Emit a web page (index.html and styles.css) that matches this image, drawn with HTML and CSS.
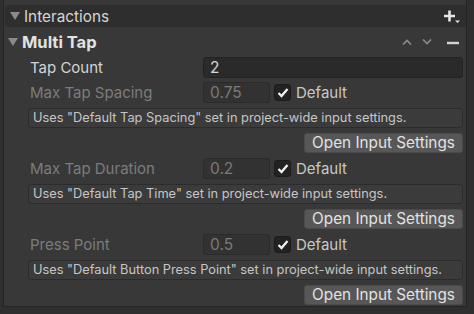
FILE: index.html
```html
<!DOCTYPE html>
<html lang="en">
  <head>
    <meta charset="UTF-8" />
    <title>Interactions</title>
    <link rel="stylesheet" href="styles.css">
  </head>
  <body>
    <div class="panel">
      <div class="list-header">
        <span class="foldout"></span>
        <span class="list-title">Interactions</span>
        <svg class="add-icon" width="16" height="14" viewBox="0 0 16 14">
          <path d="M5.5 0.5v11M0 6h11" stroke="#e6e6e6" stroke-width="2.6" fill="none"/>
          <path d="M11 10.5h5l-2.5 2.5z" fill="#e6e6e6"/>
        </svg>
      </div>

      <div class="item-header">
        <span class="foldout"></span>
        <span class="item-title">Multi Tap</span>
        <div class="item-tools">
          <svg width="10" height="6" viewBox="0 0 10 6"><path d="M1 5.5l4-4 4 4" stroke="#8c8c8c" stroke-width="1.6" fill="none"/></svg>
          <svg width="10" height="6" viewBox="0 0 10 6"><path d="M1 0.5l4 4 4-4" stroke="#8c8c8c" stroke-width="1.6" fill="none"/></svg>
          <svg class="remove" width="12" height="4" viewBox="0 0 12 4"><path d="M0 2h12" stroke="#d4d4d4" stroke-width="2.4"/></svg>
        </div>
      </div>

      <div class="fields">
        <div class="row">
          <label class="label">Tap Count</label>
          <div class="input wide">2</div>
        </div>

        <div class="row">
          <label class="label dim">Max Tap Spacing</label>
          <div class="input small dim">0.75</div>
          <span class="check"><svg width="12" height="10" viewBox="0 0 12 10"><path d="M1.5 5l3 3 6-7" stroke="#f0f0f0" stroke-width="2.3" fill="none"/></svg></span>
          <span class="check-label">Default</span>
        </div>
        <div class="help">Uses "Default Tap Spacing" set in project-wide input settings.</div>
        <div class="btn-row"><button class="btn">Open Input Settings</button></div>

        <div class="row">
          <label class="label dim">Max Tap Duration</label>
          <div class="input small dim">0.2</div>
          <span class="check"><svg width="12" height="10" viewBox="0 0 12 10"><path d="M1.5 5l3 3 6-7" stroke="#f0f0f0" stroke-width="2.3" fill="none"/></svg></span>
          <span class="check-label">Default</span>
        </div>
        <div class="help">Uses "Default Tap Time" set in project-wide input settings.</div>
        <div class="btn-row"><button class="btn">Open Input Settings</button></div>

        <div class="row">
          <label class="label dim">Press Point</label>
          <div class="input small dim">0.5</div>
          <span class="check"><svg width="12" height="10" viewBox="0 0 12 10"><path d="M1.5 5l3 3 6-7" stroke="#f0f0f0" stroke-width="2.3" fill="none"/></svg></span>
          <span class="check-label">Default</span>
        </div>
        <div class="help">Uses "Default Button Press Point" set in project-wide input settings.</div>
        <div class="btn-row"><button class="btn">Open Input Settings</button></div>
      </div>
    </div>
  </body>
</html>
```

FILE: styles.css
```css
body {
  margin: 0;
  width: 474px;
  height: 314px;
  overflow: hidden;
  background-color: #2f2f2f;
  font-family: Inter, "Noto Sans", sans-serif;
  color: #d2d2d2;
}
.panel {
  margin-left: 3px;
  width: 464px;
  height: 307px;
  padding-top: 5px;
  box-sizing: border-box;
  background-color: #383838;
  border-left: 1px solid #242424;
  border-right: 1px solid #242424;
  border-bottom: 1px solid #242424;
}
.list-header {
  display: flex;
  align-items: center;
  height: 22px;
  margin-left: 1px;
  padding: 0 6px 0 5px;
  background-color: #2e2e2e;
  font-size: 15.3px;
  color: #d6d6d6;
}
.foldout {
  width: 0;
  height: 0;
  border-left: 5px solid transparent;
  border-right: 5px solid transparent;
  border-top: 8px solid #8a8a8a;
  margin-right: 4px;
}
.list-title {
  flex: 1;
}
.add-icon {
  margin-top: 2px;
}
.item-header {
  display: flex;
  align-items: center;
  height: 25px;
  margin-top: 2px;
  padding: 0 7px 0 4px;
  font-size: 16.5px;
  font-weight: 700;
  color: #e2e2e2;
}
.item-title {
  flex: 1;
}
.item-tools {
  display: flex;
  align-items: center;
  gap: 10px;
}
.item-tools .remove {
  margin-left: 5px;
  margin-top: 3px;
}
.fields {
  display: flex;
  flex-direction: column;
  gap: 5px;
  padding: 3px 3px 0 25px;
}
.row {
  display: flex;
  align-items: center;
  height: 21px;
}
.row + .row {
  margin-top: -1px;
}
.label {
  width: 173px;
  padding-left: 1px;
  font-size: 15px;
  color: #d4d4d4;
}
.label.dim {
  color: #7c7c7c;
}
.input {
  height: 21px;
  box-sizing: border-box;
  padding: 0 6px;
  line-height: 19px;
  background-color: #2a2a2a;
  border: 1px solid #222;
  border-radius: 3px;
  font-size: 15.5px;
  color: #d6d6d6;
}
.input.wide {
  flex: 1;
}
.input.small {
  width: 67px;
}
.input.dim {
  color: #7a7a7a;
  background-color: #323232;
  border-color: #2b2b2b;
}
.check {
  display: flex;
  align-items: center;
  justify-content: center;
  width: 17px;
  height: 17px;
  margin-left: 4px;
  box-sizing: border-box;
  background-color: #222;
  border: 1px solid #1c1c1c;
  border-radius: 3px;
}
.check-label {
  margin-left: 5px;
  font-size: 15px;
  color: #c8c8c8;
}
.help {
  height: 20px;
  box-sizing: border-box;
  margin-left: -1px;
  padding: 0 4px;
  line-height: 18px;
  background-color: #3b3b3b;
  border: 1px solid #2c2c2c;
  border-radius: 3px;
  font-size: 12.8px;
  color: #c6c6c6;
  white-space: nowrap;
}
.btn-row {
  display: flex;
  justify-content: flex-end;
}
.btn {
  width: 159px;
  height: 20px;
  padding: 0;
  background-color: #575757;
  border: 1px solid #4a4a4a;
  border-radius: 3px;
  font-family: Inter, "Noto Sans", sans-serif;
  font-size: 15.3px;
  line-height: 18px;
  color: #e2e2e2;
}
```
